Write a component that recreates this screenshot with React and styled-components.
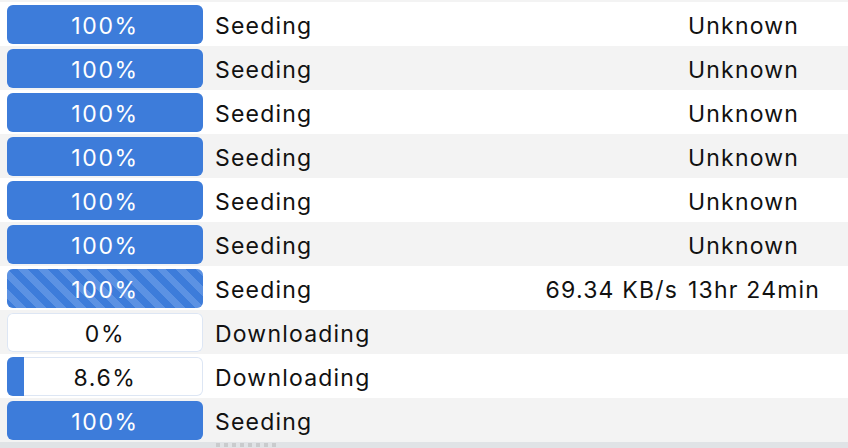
import styled, { createGlobalStyle, css } from "styled-components"

const GlobalStyle = createGlobalStyle`
  html, body {
    margin: 0;
    padding: 0;
    background: #ffffff;
    font-family: "Inter", "Liberation Sans", sans-serif;
    -webkit-font-smoothing: antialiased;
  }
`

const torrents = [
  { pct: 100, status: "Seeding", speed: "", eta: "Unknown" },
  { pct: 100, status: "Seeding", speed: "", eta: "Unknown" },
  { pct: 100, status: "Seeding", speed: "", eta: "Unknown" },
  { pct: 100, status: "Seeding", speed: "", eta: "Unknown" },
  { pct: 100, status: "Seeding", speed: "", eta: "Unknown" },
  { pct: 100, status: "Seeding", speed: "", eta: "Unknown" },
  { pct: 100, status: "Seeding", speed: "69.34 KB/s", eta: "13hr 24min", active: true },
  { pct: 0, status: "Downloading", speed: "", eta: "" },
  { pct: 8.6, status: "Downloading", speed: "", eta: "" },
  { pct: 100, status: "Seeding", speed: "", eta: "" },
]

const Page = styled.div`
  width: 848px;
  height: 448px;
  overflow: hidden;
  display: flex;
  flex-direction: column;
`

const List = styled.div`
  flex: 1;
  display: flex;
  flex-direction: column;
  padding-top: 2px;
  background: #f3f3f3;
`

const Row = styled.div`
  height: 44px;
  flex-shrink: 0;
  display: grid;
  grid-template-columns: 196px 1fr 150px 160px;
  align-items: center;
  padding-left: 7px;
  background: ${p => (p.odd ? "#f3f3f3" : "#ffffff")};
  font-size: 23px;
  letter-spacing: 1.2px;
  color: #111;
  white-space: nowrap;
`

const Bar = styled.div`
  position: relative;
  height: 39px;
  border-radius: 6px;
  overflow: hidden;
  background: #ffffff;
  box-shadow: inset 0 0 0 1px #dde6f4;
  display: flex;
  align-items: center;
  justify-content: center;
`

const Fill = styled.div`
  position: absolute;
  left: 0;
  top: 0;
  bottom: 0;
  background: #3d7cda;
  ${p =>
    p.active &&
    css`
      background: repeating-linear-gradient(
        45deg,
        #3d7cda 0px,
        #3d7cda 7px,
        #5c92e3 7px,
        #5c92e3 14px
      );
    `}
`

const Pct = styled.span`
  position: relative;
  padding-top: 3px;
  color: ${p => (p.full ? "#ffffff" : "#111")};
  font-size: 23px;
  letter-spacing: 1.6px;
`

const Status = styled.span`
  padding-left: 12px;
  padding-top: 4px;
`

const Speed = styled.span`
  text-align: right;
  padding-right: 10px;
  padding-top: 4px;
`

const Eta = styled.span`
  padding-top: 4px;
`

const Footer = styled.div`
  height: 7px;
  background: #e0e3e6;
  display: flex;
  justify-content: flex-start;
  padding-left: 216px;
  align-items: flex-start;
`

const Grip = styled.div`
  width: 61px;
  height: 4px;
  margin-top: 1px;
  background: repeating-linear-gradient(
    90deg,
    #c9cbcd 0px,
    #c9cbcd 4px,
    transparent 4px,
    transparent 8px
  );
`

export default function App() {
  return (
    <Page>
      <GlobalStyle />
      <List>
        {torrents.map((t, i) => (
          <Row key={i} odd={i % 2 === 1}>
            <Bar>
              <Fill active={t.active} style={{ width: `${t.pct}%` }} />
              <Pct full={t.pct === 100}>{t.pct}%</Pct>
            </Bar>
            <Status>{t.status}</Status>
            <Speed>{t.speed}</Speed>
            <Eta>{t.eta}</Eta>
          </Row>
        ))}
      </List>
      <Footer>
        <Grip />
      </Footer>
    </Page>
  )
}
